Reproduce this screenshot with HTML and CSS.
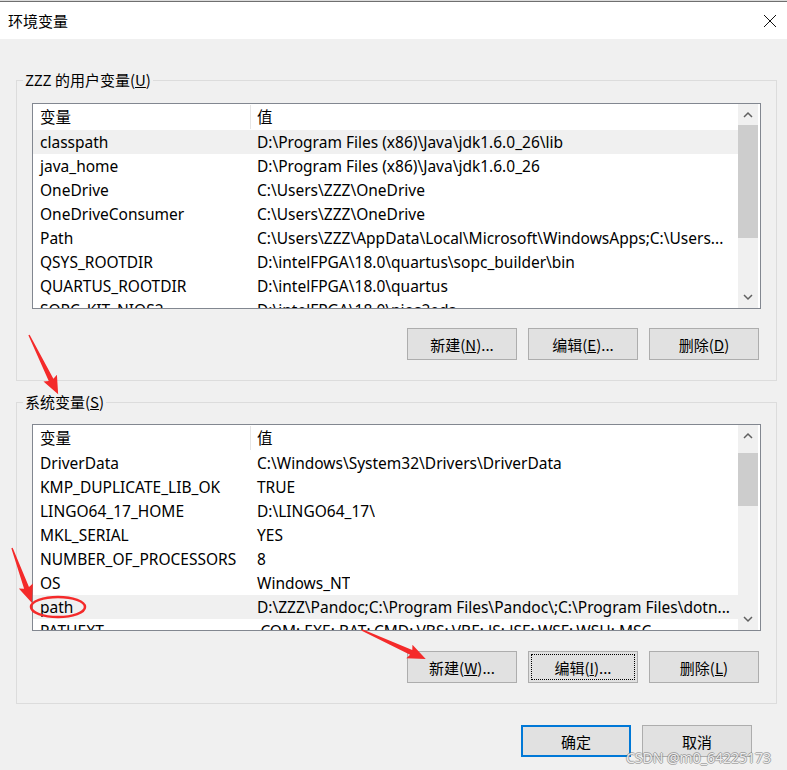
FILE: index.html
```html
<!DOCTYPE html>
<html lang="zh-CN">
<head>
<meta charset="utf-8">
<title>环境变量</title>
<link rel="stylesheet" href="styles.css">
</head>
<body>
<div class="window">
  <div class="topedge"></div>
  <div class="titlebar">
    <span class="title">环境变量</span>
    <svg class="close" width="14" height="14" viewBox="0 0 14 14"><path d="M1 1 L13 13 M13 1 L1 13" stroke="#111" stroke-width="1" fill="none"/></svg>
  </div>

  <div class="content">
    <fieldset class="group group-user">
      <legend>ZZZ 的用户变量(<u>U</u>)</legend>
      <div class="group-body body-user">
        <div class="listview list-user">
          <div class="lv-main">
            <div class="lv-header"><div class="c-name">变量</div><div class="c-val">值</div></div>
            <div class="lv-row selected"><div class="c-name">classpath</div><div class="c-val">D:\Program Files (x86)\Java\jdk1.6.0_26\lib</div></div>
            <div class="lv-row"><div class="c-name">java_home</div><div class="c-val">D:\Program Files (x86)\Java\jdk1.6.0_26</div></div>
            <div class="lv-row"><div class="c-name">OneDrive</div><div class="c-val">C:\Users\ZZZ\OneDrive</div></div>
            <div class="lv-row"><div class="c-name">OneDriveConsumer</div><div class="c-val">C:\Users\ZZZ\OneDrive</div></div>
            <div class="lv-row"><div class="c-name">Path</div><div class="c-val">C:\Users\ZZZ\AppData\Local\Microsoft\WindowsApps;C:\Users...</div></div>
            <div class="lv-row"><div class="c-name">QSYS_ROOTDIR</div><div class="c-val">D:\intelFPGA\18.0\quartus\sopc_builder\bin</div></div>
            <div class="lv-row"><div class="c-name">QUARTUS_ROOTDIR</div><div class="c-val">D:\intelFPGA\18.0\quartus</div></div>
            <div class="lv-row"><div class="c-name">SOPC_KIT_NIOS2</div><div class="c-val">D:\intelFPGA\18.0\nios2eds</div></div>
          </div>
          <div class="scrollbar">
            <div class="sb-btn"><svg width="10" height="7" viewBox="0 0 10 7"><path d="M1 6 L5 2 L9 6" stroke="#606060" stroke-width="1.5" fill="none"/></svg></div>
            <div class="sb-track"><div class="sb-thumb thumb-user"></div></div>
            <div class="sb-btn"><svg width="10" height="7" viewBox="0 0 10 7"><path d="M1 1 L5 5 L9 1" stroke="#606060" stroke-width="1.5" fill="none"/></svg></div>
          </div>
        </div>
        <div class="btn-row row-user">
          <button class="btn">新建(<u>N</u>)...</button>
          <button class="btn">编辑(<u>E</u>)...</button>
          <button class="btn">删除(<u>D</u>)</button>
        </div>
      </div>
    </fieldset>

    <fieldset class="group group-sys">
      <legend>系统变量(<u>S</u>)</legend>
      <div class="group-body body-sys">
        <div class="listview list-sys">
          <div class="lv-main">
            <div class="lv-header"><div class="c-name">变量</div><div class="c-val">值</div></div>
            <div class="lv-row"><div class="c-name">DriverData</div><div class="c-val">C:\Windows\System32\Drivers\DriverData</div></div>
            <div class="lv-row"><div class="c-name">KMP_DUPLICATE_LIB_OK</div><div class="c-val">TRUE</div></div>
            <div class="lv-row"><div class="c-name">LINGO64_17_HOME</div><div class="c-val">D:\LINGO64_17\</div></div>
            <div class="lv-row"><div class="c-name">MKL_SERIAL</div><div class="c-val">YES</div></div>
            <div class="lv-row"><div class="c-name">NUMBER_OF_PROCESSORS</div><div class="c-val">8</div></div>
            <div class="lv-row"><div class="c-name">OS</div><div class="c-val">Windows_NT</div></div>
            <div class="lv-row selected"><div class="c-name">path</div><div class="c-val">D:\ZZZ\Pandoc;C:\Program Files\Pandoc\;C:\Program Files\dotn...</div></div>
            <div class="lv-row"><div class="c-name">PATHEXT</div><div class="c-val">.COM;.EXE;.BAT;.CMD;.VBS;.VBE;.JS;.JSE;.WSF;.WSH;.MSC</div></div>
          </div>
          <div class="scrollbar">
            <div class="sb-btn"><svg width="10" height="7" viewBox="0 0 10 7"><path d="M1 6 L5 2 L9 6" stroke="#606060" stroke-width="1.5" fill="none"/></svg></div>
            <div class="sb-track"><div class="sb-thumb thumb-sys"></div></div>
            <div class="sb-btn"><svg width="10" height="7" viewBox="0 0 10 7"><path d="M1 1 L5 5 L9 1" stroke="#606060" stroke-width="1.5" fill="none"/></svg></div>
          </div>
        </div>
        <div class="btn-row row-sys">
          <button class="btn">新建(<u>W</u>)...</button>
          <button class="btn btn-focus">编辑(<u>I</u>)...</button>
          <button class="btn">删除(<u>L</u>)</button>
        </div>
      </div>
    </fieldset>
  </div>

  <div class="footer">
    <button class="btn btn-default">确定</button>
    <button class="btn">取消</button>
  </div>

  <svg class="annotations" width="787" height="770" viewBox="0 0 787 770">
    <g fill="#f42a2a">
      <polygon transform="translate(29 335) rotate(63.8)" points="0,-0.7 50,-2.6 48,-7.5 66,0 48,7.5 50,2.6 0,0.7"/>
      <polygon transform="translate(12 548) rotate(70)" points="0,-0.7 42.5,-2.6 40.5,-7.5 58.5,0 40.5,7.5 42.5,2.6 0,0.7"/>
      <polygon transform="translate(362 630) rotate(24.4)" points="0,-0.7 54,-2.6 52,-7.5 70,0 52,7.5 54,2.6 0,0.7"/>
    </g>
    <ellipse cx="58" cy="607" rx="27" ry="10" fill="none" stroke="#f42a2a" stroke-width="2.5"/>
  </svg>
  <div class="watermark">CSDN @m0_64225173</div>
</div>
</body>
</html>
```

FILE: styles.css
```css
body {
  margin: 0;
}

.window {
  position: relative;
  width: 787px;
  height: 770px;
  background: #f0f0f0;
  overflow: hidden;
  font-family: "Noto Sans CJK SC", sans-serif;
  font-size: 15px;
  color: #000;
}

.topedge {
  height: 2px;
  background: linear-gradient(#dcdcdc 0 1px, #6f6f6f 1px 2px);
}

.titlebar {
  height: 37px;
  background: #fff;
  display: flex;
  align-items: center;
  justify-content: space-between;
  padding: 0 10px 0 8px;
}

.title {
  font-size: 15px;
  line-height: 20px;
}

.close {
  display: block;
}

.content {
  padding: 0 10px 0 16px;
}

.group {
  margin: 0;
  padding: 0;
  border: 1px solid #dcdcdc;
  min-width: 0;
}

.group-user {
  margin-top: 31px;
}

.group-sys {
  margin-top: 11px;
}

.group legend {
  margin-left: 6px;
  padding: 0 2px;
  line-height: 20px;
  font-size: 15px;
}

.group-body {
  padding: 0 15px 20px 15px;
}

.body-user {
  padding-top: 13px;
}

.body-sys {
  padding-top: 12px;
}

.listview {
  box-sizing: border-box;
  height: 206px;
  border: 1px solid #828790;
  background: #fff;
  display: flex;
  padding-right: 2px;
  font-family: "Noto Sans", "Noto Sans CJK SC", sans-serif;
  font-size: 15.5px;
}

.list-sys {
  height: 207px;
}

.lv-main {
  flex: 1;
  min-width: 0;
  overflow: hidden;
}

.lv-header {
  height: 26px;
  display: flex;
  align-items: center;
  white-space: nowrap;
}

.lv-header .c-name {
  border-right: 1px solid #e5e5e5;
  line-height: 24px;
}

.lv-row {
  height: 24px;
  display: flex;
  align-items: center;
  white-space: nowrap;
}

.lv-row.selected {
  background: #f0f0f0;
}

.c-name {
  flex: none;
  width: 218px;
  box-sizing: border-box;
  padding-left: 7px;
  overflow: hidden;
  line-height: 24px;
}

.c-val {
  padding-left: 6px;
  overflow: hidden;
  line-height: 24px;
}

.scrollbar {
  flex: none;
  width: 20px;
  background: #f0f0f0;
  display: flex;
  flex-direction: column;
}

.sb-btn {
  flex: none;
  height: 21px;
  display: flex;
  align-items: center;
  justify-content: center;
}

.sb-btn svg {
  display: block;
}

.sb-track {
  flex: 1;
}

.sb-thumb {
  background: #cdcdcd;
}

.thumb-user {
  height: 113px;
}

.thumb-sys {
  margin-top: 7px;
  height: 53px;
}

.btn-row {
  display: flex;
  justify-content: flex-end;
  gap: 11px;
  padding-right: 2px;
}

.row-user {
  margin-top: 19px;
}

.row-sys {
  margin-top: 20px;
}

.btn {
  width: 110px;
  height: 32px;
  box-sizing: border-box;
  padding: 0;
  background: #e1e1e1;
  border: 1px solid #adadad;
  font-family: "Noto Sans CJK SC", sans-serif;
  font-size: 15px;
  color: #000;
}

.btn-focus {
  outline: 1px dotted #000;
  outline-offset: -4px;
}

.btn-default {
  border: 2px solid #0078d7;
}

.footer {
  display: flex;
  justify-content: flex-end;
  gap: 11px;
  margin-top: 21px;
  padding-right: 35px;
}

.annotations {
  position: absolute;
  left: 0;
  top: 0;
  pointer-events: none;
}

.watermark {
  position: absolute;
  right: 16px;
  bottom: 3px;
  font-family: "Noto Sans", sans-serif;
  font-size: 14px;
  color: rgba(255, 255, 255, 0.85);
  text-shadow: 1px 0 0 rgba(120, 120, 120, 0.55), -1px 0 0 rgba(120, 120, 120, 0.55), 0 1px 0 rgba(120, 120, 120, 0.55), 0 -1px 0 rgba(120, 120, 120, 0.55);
}
```
